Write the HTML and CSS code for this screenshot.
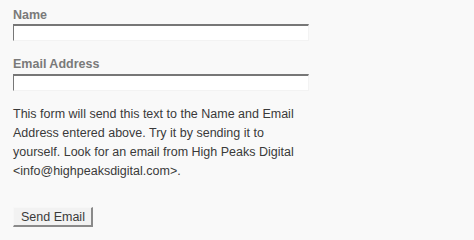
FILE: index.html
```html
<!DOCTYPE html>
<html>
<head>
<meta charset="utf-8">
<link rel="stylesheet" href="styles.css">
</head>
<body>
<form class="form">
  <label class="field-label" for="name">Name</label>
  <input class="field-input" id="name" type="text">
  <label class="field-label field-label-second" for="email">Email Address</label>
  <input class="field-input" id="email" type="text">
  <p class="note">This form will send this text to the Name and Email Address entered above. Try it by sending it to yourself. Look for an email from High Peaks Digital &lt;info@highpeaksdigital.com&gt;.</p>
  <button class="send-btn" type="button">Send Email</button>
</form>
</body>
</html>
```
FILE: styles.css
```css
html, body {
  margin: 0;
  padding: 0;
  background: #f9f9f9;
}
body {
  font-family: "Liberation Sans", Arial, sans-serif;
  font-size: 12px;
  color: #3a3a3a;
}
.form {
  padding: 8px 13px 0 13px;
  display: flex;
  flex-direction: column;
  align-items: flex-start;
}
.field-label {
  display: block;
  font-weight: bold;
  color: #7a7a7a;
  font-size: 12.5px;
  line-height: 14px;
  margin-bottom: 2px;
}
.field-label-second {
  margin-top: 16px;
  margin-bottom: 3px;
}
.field-input {
  display: block;
  box-sizing: border-box;
  width: 296px;
  height: 17px;
  margin: 0;
  padding: 0;
  background: #ffffff;
  border-top: 2px solid #777777;
  border-left: 1px solid #777777;
  border-right: 1px solid #f3f3f3;
  border-bottom: 1px solid #f3f3f3;
  outline: none;
}
.note {
  margin: 14px 0 0 0;
  width: 300px;
  font-size: 12.5px;
  line-height: 19px;
  color: #3a3a3a;
}
.send-btn {
  margin-top: 26px;
  font-family: "Liberation Sans", Arial, sans-serif;
  font-size: 12.5px;
  color: #3a3a3a;
  background: #f2f2f2;
  padding: 2px 6px 1px 7px;
  border-top: 1px solid #f7f7f7;
  border-left: 1px solid #f7f7f7;
  border-right: 2px solid #8a8a8a;
  border-bottom: 2px solid #8a8a8a;
  border-radius: 0;
  line-height: 14px;
}
```
